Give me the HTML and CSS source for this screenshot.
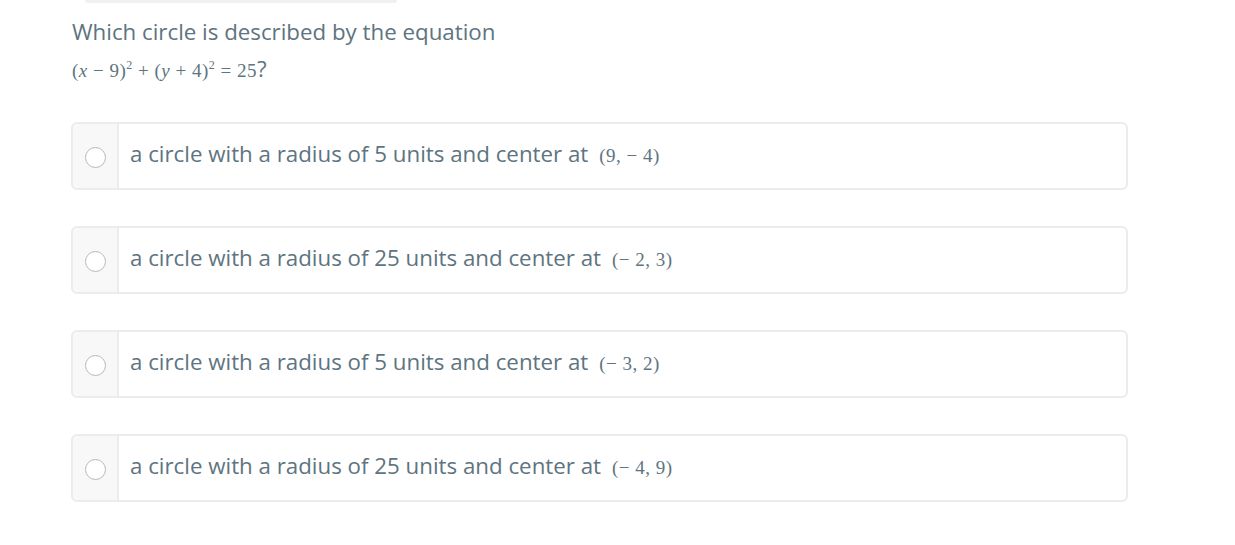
FILE: index.html
```html
<!DOCTYPE html>
<html>
<head>
<meta charset="utf-8">
<link rel="stylesheet" href="styles.css">
</head>
<body>
<div class="page">
  <div class="topbar"></div>
  <div class="question">
    <p class="q-text">Which circle is described by the equation</p>
    <p class="q-eq"><span class="math">(<i>x</i> − 9)<sup>2</sup> + (<i>y</i> + 4)<sup>2</sup> = 25</span>?</p>
  </div>
  <div class="options">
    <label class="option">
      <span class="radio-cell"><span class="radio"></span></span>
      <span class="label">a circle with a radius of 5 units and center at <span class="math">(9, − 4)</span></span>
    </label>
    <label class="option">
      <span class="radio-cell"><span class="radio"></span></span>
      <span class="label">a circle with a radius of 25 units and center at <span class="math">(− 2, 3)</span></span>
    </label>
    <label class="option">
      <span class="radio-cell"><span class="radio"></span></span>
      <span class="label">a circle with a radius of 5 units and center at <span class="math">(− 3, 2)</span></span>
    </label>
    <label class="option">
      <span class="radio-cell"><span class="radio"></span></span>
      <span class="label">a circle with a radius of 25 units and center at <span class="math">(− 4, 9)</span></span>
    </label>
  </div>
</div>
</body>
</html>
```
FILE: styles.css
```css
html, body {
  margin: 0;
  padding: 0;
  background: #ffffff;
}
.page {
  padding-left: 71px;
  width: 1057px;
  font-family: "Open Sans", "Noto Sans", sans-serif;
  color: #5e7480;
}
.topbar {
  margin-left: 14px;
  width: 312px;
  height: 3px;
  background: #eef0f2;
  border-radius: 0 0 24px 24px;
}
.question {
  padding-left: 1px;
  padding-top: 14px;
}
.q-text {
  margin: 0;
  font-size: 22.3px;
  line-height: 30px;
}
.q-eq {
  margin: 8px 0 0;
  font-size: 22.3px;
  line-height: 28px;
}
.math {
  font-family: "Liberation Serif", "DejaVu Serif", serif;
  font-size: 19px;
  letter-spacing: 0.5px;
}
.math sup {
  font-size: 12px;
  vertical-align: 8px;
  line-height: 0;
}
.options {
  margin-top: 37px;
  display: flex;
  flex-direction: column;
  gap: 36px;
}
.option {
  display: flex;
  height: 64px;
  border: 2px solid #ececec;
  border-radius: 6px;
  overflow: hidden;
}
.radio-cell {
  width: 44px;
  background: #f8f8f8;
  border-right: 2px solid #ececec;
  display: flex;
  align-items: center;
  justify-content: center;
}
.radio {
  width: 19px;
  height: 19px;
  border: 1px solid #b8b8b8;
  border-radius: 50%;
  background: #ffffff;
  margin-top: 2px;
}
.label {
  display: flex;
  align-items: center;
  gap: 11px;
  padding-left: 11px;
  font-size: 22.3px;
  margin-top: -5px;
}
.label .math {
  margin-top: 4px;
}
```
